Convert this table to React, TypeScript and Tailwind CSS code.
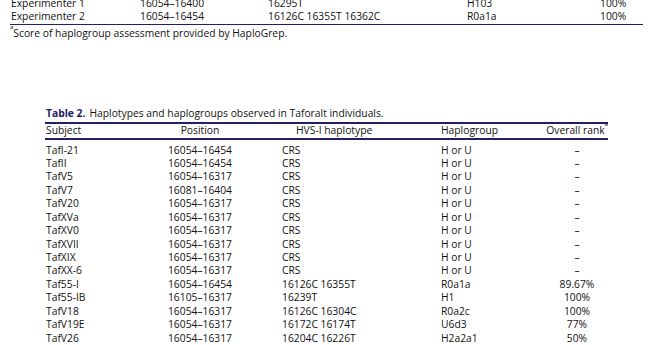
import React from "react";

const rows: [string, string, string, string, string][] = [
  ["TafI-21", "16054–16454", "CRS", "H or U", "–"],
  ["TafII", "16054–16454", "CRS", "H or U", "–"],
  ["TafV5", "16054–16317", "CRS", "H or U", "–"],
  ["TafV7", "16081–16404", "CRS", "H or U", "–"],
  ["TafV20", "16054–16317", "CRS", "H or U", "–"],
  ["TafXVa", "16054–16317", "CRS", "H or U", "–"],
  ["TafXV0", "16054–16317", "CRS", "H or U", "–"],
  ["TafXVII", "16054–16317", "CRS", "H or U", "–"],
  ["TafXIX", "16054–16317", "CRS", "H or U", "–"],
  ["TafXX-6", "16054–16317", "CRS", "H or U", "–"],
  ["Taf55-I", "16054–16454", "16126C 16355T", "R0a1a", "89.67%"],
  ["Taf55-IB", "16105–16317", "16239T", "H1", "100%"],
  ["TafV18", "16054–16317", "16126C 16304C", "R0a2c", "100%"],
  ["TafV19E", "16054–16317", "16172C 16174T", "U6d3", "77%"],
  ["TafV26", "16054–16317", "16204C 16226T", "H2a2a1", "50%"],
];

const topRows: [string, string, string, string, string][] = [
  ["Experimenter 1", "16054–16400", "16295T", "H103", "100%"],
  ["Experimenter 2", "16054–16454", "16126C 16355T 16362C", "R0a1a", "100%"],
];

export default function App() {
  return (
    <div className="w-[657px] h-[345px] overflow-hidden bg-white text-[10.3px] leading-[13.5px] text-[#111111] font-['Open_Sans',sans-serif]">
      {/* top table tail */}
      <div className="ml-[10px] w-[633px] mt-[-3.5px]">
        {topRows.map((r) => (
          <div key={r[0]} className="grid grid-cols-[130px_128px_199px_133px_43px] h-[13.5px] whitespace-nowrap">
            <div className="pl-[1px]">{r[0]}</div>
            <div>{r[1]}</div>
            <div>{r[2]}</div>
            <div>{r[3]}</div>
            <div>{r[4]}</div>
          </div>
        ))}
        <div className="h-[1.5px] bg-[#221f66]" />
      </div>
      <div className="ml-[10px] mt-[2px] h-[13.5px] whitespace-nowrap">
        <sup className="text-[6px] align-[5px]">a</sup>
        Score of haplogroup assessment provided by HaploGrep.
      </div>

      {/* Table 2 */}
      <div className="ml-[45px] w-[563px] mt-[66.5px]">
        <div className="h-[13.5px] whitespace-nowrap pl-[1px]">
          <span className="font-bold text-[#1e1b5e]">Table 2.</span>
          <span className="ml-[4px]">Haplotypes and haplogroups observed in Taforalt individuals.</span>
        </div>
        <div className="mt-[1px] h-[2px] bg-[#221f66]" />
        <div className="grid grid-cols-[85px_140px_171px_105px_62px] h-[14px] items-center whitespace-nowrap">
          <div className="pl-[1px]">Subject</div>
          <div className="text-center">Position</div>
          <div className="pl-[26px]">HVS-I haplotype</div>
          <div>Haplogroup</div>
          <div className="text-right">
            Overall rank<sup className="text-[6px] align-[5px]">a</sup>
          </div>
        </div>
        <div className="h-[2px] bg-[#221f66]" />
        <div className="mt-[4px]">
          {rows.map((r) => (
            <div key={r[0]} className="grid grid-cols-[85px_140px_171px_105px_62px] h-[13.45px] items-center whitespace-nowrap">
              <div className="pl-[1px]">{r[0]}</div>
              <div className="text-center">{r[1]}</div>
              <div className="pl-[12px]">{r[2]}</div>
              <div>{r[3]}</div>
              <div className="text-center">{r[4]}</div>
            </div>
          ))}
        </div>
      </div>
    </div>
  );
}
